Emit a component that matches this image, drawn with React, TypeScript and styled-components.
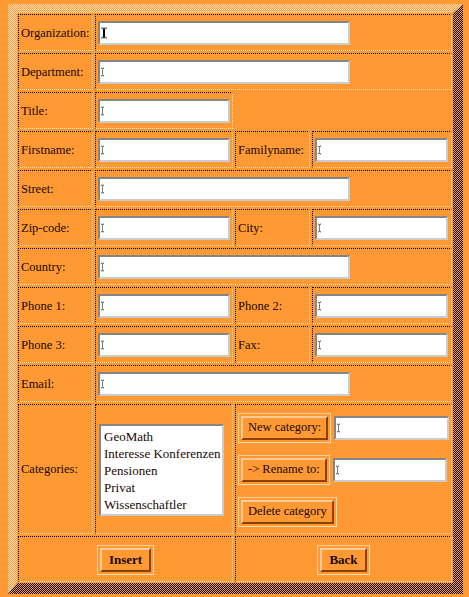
import React from 'react';
import styled, {createGlobalStyle} from 'styled-components';

const ORANGE = '#ff9933';
const LIGHT = '#ffe2bd';
const INK = '#1a0800';

const GlobalStyle = createGlobalStyle`
  html, body {
    margin: 0;
    padding: 0;
    background: ${ORANGE};
  }
  body {
    font-family: "Liberation Serif", "Times New Roman", serif;
    color: ${INK};
  }
`

const Page = styled.div`
  padding: 4px 0 0 8px;
`

// 3d border of the table, drawn as dithered pixels like the old browser did
const Frame = styled.div`
  position: relative;
  width: 455px;
  box-sizing: border-box;
  padding: 9px 10px 11px 9px;
  background: repeating-conic-gradient(#000 0 25%, ${ORANGE} 0 50%) 0 0 / 2px 2px;

  &::before {
    content: "";
    position: absolute;
    inset: 0;
    background: repeating-conic-gradient(${LIGHT} 0 25%, ${ORANGE} 0 50%) 0 0 / 2px 2px;
    clip-path: polygon(0 0, 100% 0, calc(100% - 10px) 9px, 9px 9px, 9px calc(100% - 11px), 0 100%);
  }
`

const Table = styled.div`
  position: relative;
  background: ${ORANGE};
  padding: 1px;
  display: flex;
  flex-direction: column;
  gap: 2px;
`

const Row = styled.div<{ $h: number }>`
  display: grid;
  grid-template-columns: 75px 138px 75px 140px;
  gap: 2px;
  height: ${p => p.$h}px;
`

const Cell = styled.div<{ $span?: number; $center?: boolean }>`
  grid-column: span ${p => p.$span || 1};
  box-sizing: border-box;
  border: 1px dotted;
  border-color: #000 ${LIGHT} ${LIGHT} #000;
  display: flex;
  align-items: center;
  justify-content: ${p => (p.$center ? 'center' : 'flex-start')};
  padding: 1px 2px 0;
  font-size: 12.5px;
  white-space: nowrap;
`

const Field = styled.span<{ $w: number }>`
  position: relative;
  display: inline-block;
  width: ${p => p.$w}px;
  height: 24px;
`

const Input = styled.input`
  width: 100%;
  height: 100%;
  box-sizing: border-box;
  margin: 0;
  padding: 0 6px;
  border: 2px solid;
  border-color: #858585 #cbcbcb #cbcbcb #858585;
  background: #fff;
  outline: none;
  font-family: inherit;
  font-size: 13px;
`

const Caret = styled.svg`
  position: absolute;
  left: 3px;
  top: 50%;
  transform: translateY(-50%);
  pointer-events: none;
`

const ListBox = styled.div`
  margin-left: 1px;
  width: 125px;
  height: 92px;
  box-sizing: border-box;
  border: 2px solid;
  border-color: #858585 #cbcbcb #cbcbcb #858585;
  background: #fff;
  padding: 2px 0 0 3px;
  font-size: 13px;
  line-height: 17px;
  overflow: hidden;
`

const Actions = styled.div`
  display: flex;
  flex-direction: column;
  gap: 12px;
`

const ActionRow = styled.div`
  display: flex;
  align-items: center;
  gap: 3px;
`

const ButtonFrame = styled.span`
  display: inline-flex;
  padding: 2px;
  border: 1px solid;
  border-color: #ffcf9c #ffdcb5 #ffdcb5 #ffcf9c;
`

const Button = styled.button<{ $bold?: boolean }>`
  margin: 0;
  height: 24px;
  padding: 0 ${p => (p.$bold ? 7 : 5)}px;
  border: 2px solid;
  border-color: #ffcc99 #8f3f00 #8f3f00 #ffcc99;
  background: ${ORANGE};
  color: ${INK};
  font-family: inherit;
  font-size: ${p => (p.$bold ? 13 : 12.5)}px;
  font-weight: ${p => (p.$bold ? 700 : 400)};
  cursor: pointer;
`

const BoldCaret = () => (
    <Caret width="6" height="11" viewBox="0 0 6 11">
        <rect x="0" y="0" width="6" height="1" fill="#000"/>
        <rect x="2" y="1" width="2" height="9" fill="#000"/>
        <rect x="0" y="10" width="6" height="1" fill="#000"/>
    </Caret>
)

const DotCaret = () => (
    <Caret width="3" height="9" viewBox="0 0 3 9">
        <rect x="0" y="0" width="3" height="9" fill="#fff"/>
        <rect x="0" y="0" width="1" height="1" fill="#000"/>
        <rect x="2" y="0" width="1" height="1" fill="#000"/>
        <rect x="1" y="1" width="1" height="1" fill="#000"/>
        <rect x="1" y="3" width="1" height="1" fill="#000"/>
        <rect x="1" y="5" width="1" height="1" fill="#000"/>
        <rect x="1" y="7" width="1" height="1" fill="#000"/>
        <rect x="0" y="8" width="1" height="1" fill="#000"/>
        <rect x="2" y="8" width="1" height="1" fill="#000"/>
    </Caret>
)

const TextField = ({w, focused}: { w: number; focused?: boolean }) => (
    <Field $w={w}>
        <Input type="text"/>
        {focused ? <BoldCaret/> : <DotCaret/>}
    </Field>
)

const categories = ['GeoMath', 'Interesse Konferenzen', 'Pensionen', 'Privat', 'Wissenschaftler'];

const WIDE = 252;
const NARROW = 132;
const RIGHT = 133;

export default function App() {
    return (
        <Page>
            <GlobalStyle/>
            <Frame>
                <Table>
                    <Row $h={37}>
                        <Cell>Organization:</Cell>
                        <Cell $span={3}><TextField w={WIDE} focused/></Cell>
                    </Row>
                    <Row $h={37}>
                        <Cell>Department:</Cell>
                        <Cell $span={3}><TextField w={WIDE}/></Cell>
                    </Row>
                    <Row $h={37}>
                        <Cell>Title:</Cell>
                        <Cell><TextField w={NARROW}/></Cell>
                    </Row>
                    <Row $h={37}>
                        <Cell>Firstname:</Cell>
                        <Cell><TextField w={NARROW}/></Cell>
                        <Cell>Familyname:</Cell>
                        <Cell><TextField w={RIGHT}/></Cell>
                    </Row>
                    <Row $h={37}>
                        <Cell>Street:</Cell>
                        <Cell $span={3}><TextField w={WIDE}/></Cell>
                    </Row>
                    <Row $h={37}>
                        <Cell>Zip-code:</Cell>
                        <Cell><TextField w={NARROW}/></Cell>
                        <Cell>City:</Cell>
                        <Cell><TextField w={RIGHT}/></Cell>
                    </Row>
                    <Row $h={37}>
                        <Cell>Country:</Cell>
                        <Cell $span={3}><TextField w={WIDE}/></Cell>
                    </Row>
                    <Row $h={37}>
                        <Cell>Phone 1:</Cell>
                        <Cell><TextField w={NARROW}/></Cell>
                        <Cell>Phone 2:</Cell>
                        <Cell><TextField w={RIGHT}/></Cell>
                    </Row>
                    <Row $h={37}>
                        <Cell>Phone 3:</Cell>
                        <Cell><TextField w={NARROW}/></Cell>
                        <Cell>Fax:</Cell>
                        <Cell><TextField w={RIGHT}/></Cell>
                    </Row>
                    <Row $h={37}>
                        <Cell>Email:</Cell>
                        <Cell $span={3}><TextField w={WIDE}/></Cell>
                    </Row>
                    <Row $h={130}>
                        <Cell>Categories:</Cell>
                        <Cell>
                            <ListBox>
                                {categories.map(c => <div key={c}>{c}</div>)}
                            </ListBox>
                        </Cell>
                        <Cell $span={2}>
                            <Actions>
                                <ActionRow>
                                    <ButtonFrame><Button>New category:</Button></ButtonFrame>
                                    <TextField w={115}/>
                                </ActionRow>
                                <ActionRow>
                                    <ButtonFrame><Button>-&gt; Rename to:</Button></ButtonFrame>
                                    <TextField w={114}/>
                                </ActionRow>
                                <ActionRow>
                                    <ButtonFrame><Button>Delete category</Button></ButtonFrame>
                                </ActionRow>
                            </Actions>
                        </Cell>
                    </Row>
                    <Row $h={46}>
                        <Cell $span={2} $center>
                            <ButtonFrame><Button $bold>Insert</Button></ButtonFrame>
                        </Cell>
                        <Cell $span={2} $center>
                            <ButtonFrame><Button $bold>Back</Button></ButtonFrame>
                        </Cell>
                    </Row>
                </Table>
            </Frame>
        </Page>
    );
}
